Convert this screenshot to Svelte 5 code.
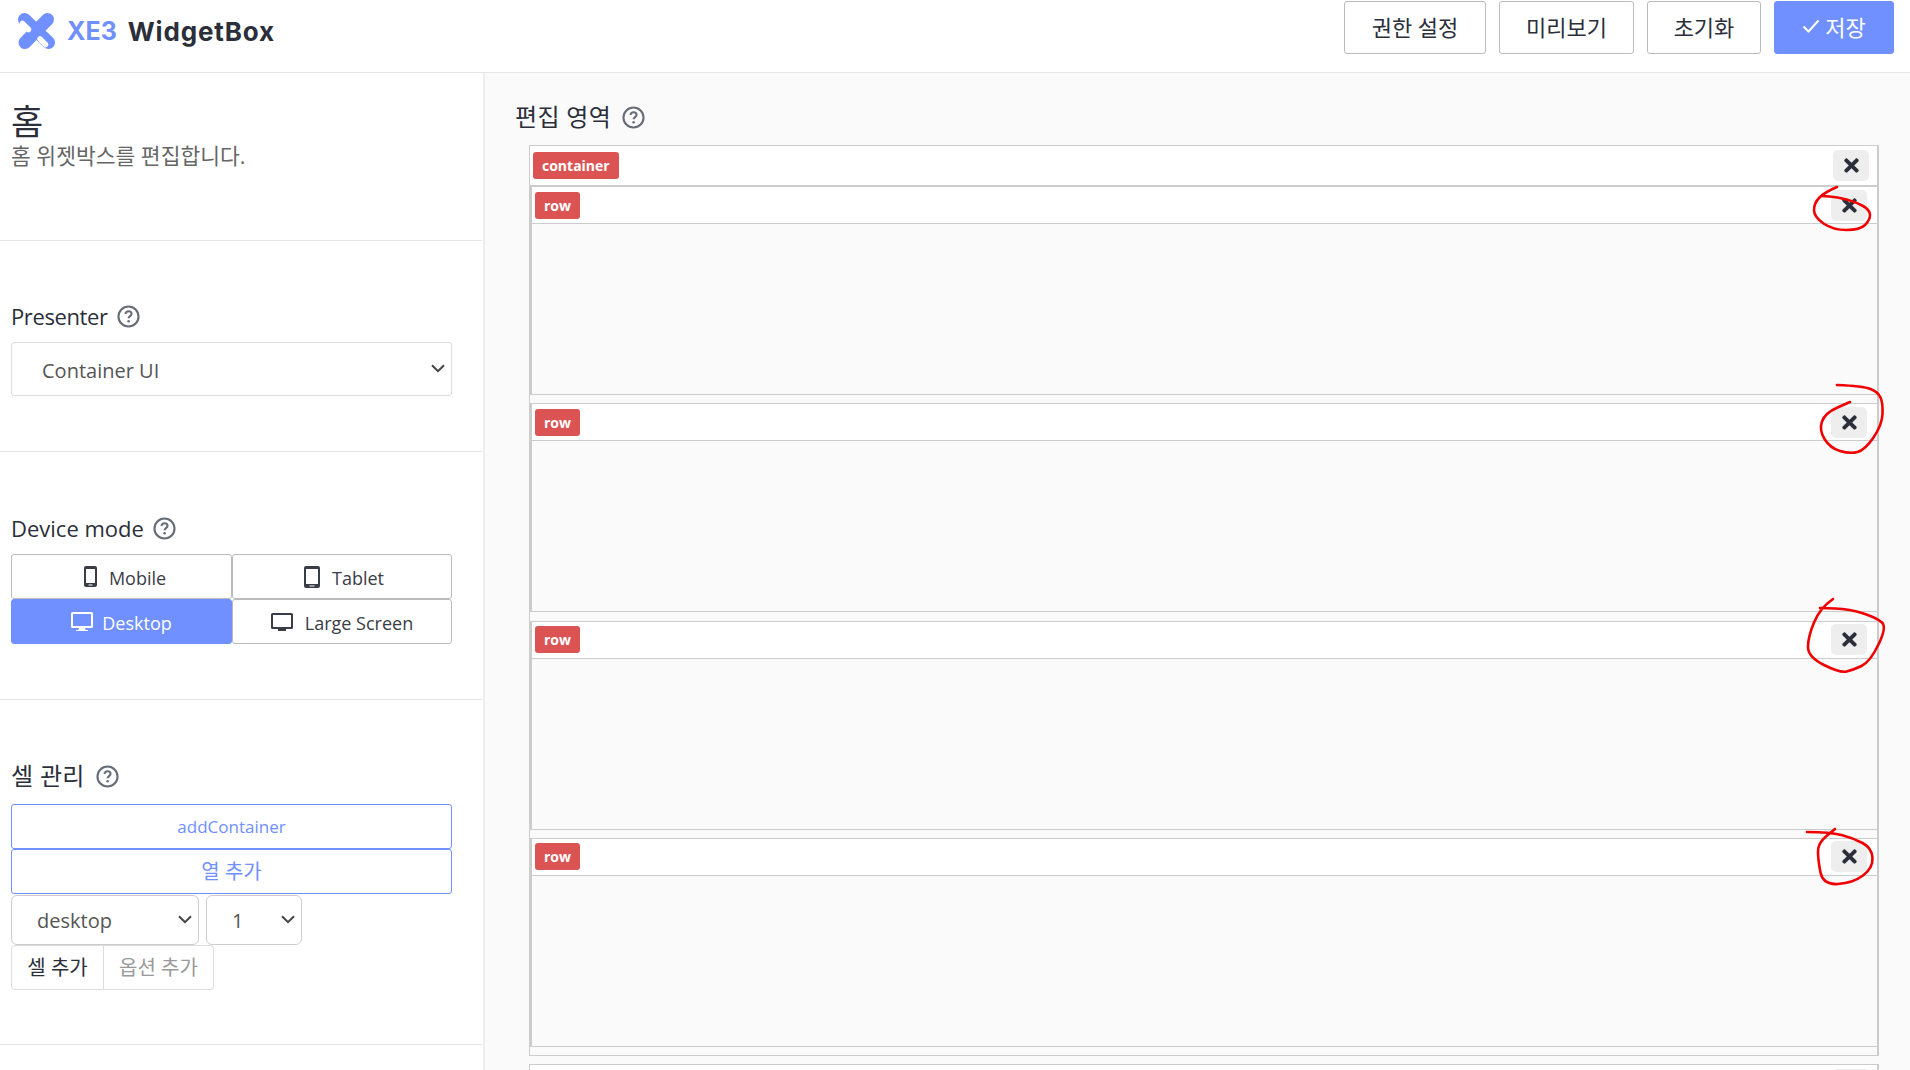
<script>
	const rows = [1, 2, 3, 4];

	// hand drawn red marks over the delete buttons
	const marks = [
		[[1837, 187], [1825, 192], [1814, 203], [1814, 217], [1833, 230], [1860, 230], [1870, 220], [1870, 210], [1856, 202], [1837, 197], [1822, 196]],
		[[1837, 385], [1863, 386], [1878, 392], [1883, 403], [1882, 425], [1865, 450], [1850, 454], [1830, 448], [1819, 430], [1825, 413], [1850, 402]],
		[[1833, 599], [1820, 608], [1808, 637], [1808, 657], [1840, 673], [1853, 670], [1870, 662], [1887, 627], [1877, 618], [1850, 609], [1820, 608]],
		[[1807, 832], [1830, 832], [1853, 838], [1872, 848], [1873, 868], [1853, 883], [1823, 885], [1818, 860], [1818, 843], [1835, 829]]
	];

	function smooth(points) {
		let d = `M${points[0][0]} ${points[0][1]}`;
		for (let i = 1; i < points.length - 1; i++) {
			const mx = (points[i][0] + points[i + 1][0]) / 2;
			const my = (points[i][1] + points[i + 1][1]) / 2;
			d += ` Q${points[i][0]} ${points[i][1]} ${mx} ${my}`;
		}
		const last = points[points.length - 1];
		return d + ` L${last[0]} ${last[1]}`;
	}

	const timesPath =
		'M242.72 256l100.07-100.07c12.28-12.28 12.28-32.19 0-44.48l-22.24-22.24c-12.28-12.28-32.19-12.28-44.48 0L176 189.28 75.93 89.21c-12.28-12.28-32.19-12.28-44.48 0L9.21 111.45c-12.28 12.28-12.28 32.19 0 44.48L109.28 256 9.21 356.07c-12.28 12.28-12.28 32.19 0 44.48l22.24 22.24c12.28 12.28 32.2 12.28 44.48 0L176 322.72l100.07 100.07c12.28 12.28 32.2 12.28 44.48 0l22.24-22.24c12.28-12.28 12.28-32.19 0-44.48L242.72 256z';
</script>

{#snippet help()}
	<svg class="help" viewBox="0 0 22 22" width="23" height="23">
		<circle cx="11" cy="11" r="9.6" fill="none" stroke="#666c78" stroke-width="2" />
		<path d="M8.2 8.6c0-1.6 1.2-2.600 2.900-2.600s2.800 1 2.800 2.400c0 2.200-2.800 2.200-2.800 4.200" fill="none" stroke="#666c78" stroke-width="2" />
		<circle cx="11.1" cy="15.600" r="1.200" fill="#666c78" />
	</svg>
{/snippet}

{#snippet times()}
	<svg viewBox="0 0 352 512" width="15" height="21"><path d={timesPath} fill="#2b2f3a" /></svg>
{/snippet}

{#snippet chevron()}
	<svg class="chev" viewBox="0 0 14 9" width="14" height="9"><path d="M1 1.200l6 6 6-6" fill="none" stroke="#444" stroke-width="2" /></svg>
{/snippet}

<div class="page">
	<header class="topbar">
		<div class="logo">
			<svg viewBox="0 0 39 38" width="39" height="38">
				<line x1="30.500" y1="7.500" x2="8" y2="30.500" stroke="#7090ff" stroke-width="13" stroke-linecap="round" />
				<line x1="7.500" y1="7.500" x2="31.500" y2="30.500" stroke="#7090ff" stroke-width="13" stroke-linecap="round" />
				<line x1="5.500" y1="11.500" x2="11.500" y2="17.500" stroke="#fff" stroke-width="5.500" stroke-linecap="round" />
				<line x1="23" y1="27" x2="28.500" y2="32.500" stroke="#fff" stroke-width="5.500" stroke-linecap="round" />
			</svg>
			<span class="xe">XE3</span>
			<span class="wb">WidgetBox</span>
		</div>
		<div class="actions">
			<button class="btn w-auth">권한 설정</button>
			<button class="btn w-prev">미리보기</button>
			<button class="btn w-reset">초기화</button>
			<button class="btn save">
				<svg viewBox="0 0 18 14" width="18" height="14"><path d="M1.500 7.500l5 5 10-11" fill="none" stroke="#fff" stroke-width="2" /></svg>
				저장
			</button>
		</div>
	</header>

	<div class="body">
		<aside class="side">
			<section class="sec sec-title">
				<h1>홈</h1>
				<p>홈 위젯박스를 편집합니다.</p>
			</section>

			<section class="sec sec-presenter">
				<div class="label tight">Presenter {@render help()}</div>
				<div class="select full">
					<select><option>Container UI</option></select>
					{@render chevron()}
				</div>
			</section>

			<section class="sec sec-device">
				<div class="label">Device mode {@render help()}</div>
				<div class="devices">
					<button class="dev mobile">
						<svg viewBox="0 0 13 21" width="13" height="21"><path fill-rule="evenodd" d="M2 0h9a2 2 0 0 1 2 2v17a2 2 0 0 1-2 2H2a2 2 0 0 1-2-2V2a2 2 0 0 1 2-2zm0 3v14h9V3zm2.500 15.500v1h4v-1z" fill="#3a3d46" /></svg>
						<span>Mobile</span>
					</button>
					<button class="dev tablet">
						<svg viewBox="0 0 16 22" width="16" height="22"><path fill-rule="evenodd" d="M2 0h12a2 2 0 0 1 2 2v18a2 2 0 0 1-2 2H2a2 2 0 0 1-2-2V2a2 2 0 0 1 2-2zm0 3v15h12V3zm3.500 16.500v1h5v-1z" fill="#3a3d46" /></svg>
						<span>Tablet</span>
					</button>
					<button class="dev on">
						<svg viewBox="0 0 22 19" width="22" height="19"><path fill-rule="evenodd" d="M1.500 0h19A1.500 1.500 0 0 1 22 1.500v13a1.500 1.500 0 0 1-1.500 1.500H14l.6 2H17v1H5v-1h2.400l.6-2H1.500A1.500 1.500 0 0 1 0 14.500v-13A1.500 1.500 0 0 1 1.500 0zM2 2v12h18V2z" fill="#fff" /></svg>
						<span>Desktop</span>
					</button>
					<button class="dev">
						<svg viewBox="0 0 22 18" width="22" height="18"><path fill-rule="evenodd" d="M1.500 0h19A1.500 1.500 0 0 1 22 1.500v13a1.500 1.500 0 0 1-1.500 1.500H15v2H7v-2H1.500A1.500 1.500 0 0 1 0 14.500v-13A1.500 1.500 0 0 1 1.500 0zM2 2v12h18V2z" fill="#3a3d46" /></svg>
						<span>Large Screen</span>
					</button>
				</div>
			</section>

			<section class="sec sec-cell">
				<div class="label ko">셀 관리 {@render help()}</div>
				<button class="outline">addContainer</button>
				<button class="outline ko-btn">열 추가</button>
				<div class="pickers">
					<div class="select mode">
						<select><option>desktop</option></select>
						{@render chevron()}
					</div>
					<div class="select count">
						<select><option>1</option></select>
						{@render chevron()}
					</div>
				</div>
				<div class="group">
					<button class="g1">셀 추가</button>
					<button class="g2">옵션 추가</button>
				</div>
			</section>
		</aside>

		<main class="editor">
			<div class="label ko">편집 영역 {@render help()}</div>
			<div class="box">
				<div class="box-head">
					<span class="tag">container</span>
					<button class="del">{@render times()}</button>
				</div>
				<div class="rows">
					{#each rows as r (r)}
						<div class="row">
							<div class="row-head">
								<span class="tag">row</span>
								<button class="del">{@render times()}</button>
							</div>
							<div class="row-body"></div>
						</div>
					{/each}
				</div>
			</div>
			<div class="box next">
				<div class="box-head">
					<button class="del">{@render times()}</button>
				</div>
			</div>
		</main>
	</div>

	<svg class="marks" viewBox="0 0 1910 1070" width="1910" height="1070">
		{#each marks as m}
			<path d={smooth(m)} fill="none" stroke="#f00000" stroke-width="2.600" stroke-linecap="round" stroke-linejoin="round" />
		{/each}
	</svg>
</div>

<style>
	:global(body) {
		margin: 0;
		background: #fff;
	}

	.page {
		position: relative;
		width: 1910px;
		height: 1070px;
		overflow: hidden;
		font-family: 'Open Sans', 'Noto Sans CJK KR', sans-serif;
		color: #2b2f3a;
	}

	button {
		font-family: inherit;
		cursor: pointer;
	}

	/* === TOP BAR === */
	.topbar {
		height: 72px;
		box-sizing: content-box;
		border-bottom: 1px solid #e6e6e6;
		display: flex;
		align-items: flex-start;
		justify-content: space-between;
		padding: 0 16px 0 17px;
	}

	.logo {
		display: flex;
		align-items: center;
		height: 64px;
		margin-top: -1px;
	}

	.xe,
	.wb {
		font-family: Inter, sans-serif;
		font-weight: 700;
		font-size: 25px;
	}

	.xe {
		color: #7090ff;
		margin-left: 11px;
		margin-right: 11px;
	}

	.wb {
		font-size: 26px;
		letter-spacing: 0.85px;
		color: #2b2f3a;
	}

	.actions {
		display: flex;
		gap: 13px;
		padding-top: 1px;
	}

	.btn {
		height: 53px;
		background: #fff;
		border: 1px solid #bbb;
		border-radius: 3px;
		font-size: 22px;
		color: #2b2f3a;
		padding: 0 0 4px;
	}

	.w-auth { width: 142px; }
	.w-prev { width: 135px; }
	.w-reset { width: 114px; }

	.save {
		width: 120px;
		background: #7090ff;
		border-color: #7090ff;
		color: #fff;
		display: flex;
		align-items: center;
		justify-content: center;
		gap: 5px;
	}

	/* === LAYOUT === */
	.body {
		display: flex;
		height: 997px;
	}

	.side {
		width: 482px;
		flex: none;
		border-right: 2px solid #eee;
		padding-right: 1px;
		box-sizing: content-box;
	}

	.sec {
		border-bottom: 1px solid #e6e6e6;
		padding: 0 0 0 11px;
		box-sizing: border-box;
	}

	.sec-title { height: 168px; padding-top: 29px; }
	.sec-presenter { height: 211px; padding-top: 60px; }
	.sec-device { height: 248px; padding-top: 61px; }
	.sec-cell { height: 345px; padding-top: 61px; }

	h1 {
		margin: 0;
		font-size: 35px;
		line-height: 40px;
		font-weight: 400;
	}

	.sec-title p {
		margin: 0;
		font-size: 21.500px;
		line-height: 27px;
		color: #666;
	}

	.label {
		display: flex;
		align-items: center;
		gap: 9px;
		font-size: 22px;
		line-height: 30px;
		margin-bottom: 11px;
	}

	.label.tight {
		letter-spacing: -0.4px;
	}

	.label.ko {
		font-size: 24px;
		letter-spacing: 0.3px;
		gap: 11px;
		margin-bottom: 13px;
	}

	/* === SELECTS === */
	.select {
		position: relative;
		box-sizing: border-box;
	}

	.select select {
		appearance: none;
		width: 100%;
		height: 100%;
		background: #fff;
		font-family: inherit;
		font-size: 20px;
		color: #555;
		border: 1px solid #ccc;
		border-radius: 6px;
		box-sizing: border-box;
		padding: 0 0 0 25px;
	}

	.chev {
		position: absolute;
		right: 7px;
		top: 50%;
		margin-top: -5px;
		pointer-events: none;
	}

	.full {
		width: 441px;
		height: 54px;
	}

	.full select {
		border-color: #ddd;
		border-radius: 3px;
		padding: 2px 0 0 30px;
	}

	/* === DEVICE MODE === */
	.devices {
		width: 441px;
		display: grid;
		grid-template-columns: 221px 220px;
		grid-auto-rows: 45px;
		margin-top: 1px;
	}

	.dev {
		background: #fff;
		border: 1px solid #bbb;
		font-size: 18px;
		color: #3a3d46;
		display: flex;
		align-items: center;
		justify-content: center;
		gap: 12px;
		padding: 0;
		border-radius: 3px;
	}

	.dev span {
		padding-top: 2px;
	}

	.dev.mobile {
		padding-left: 7px;
	}

	.dev.tablet {
		padding-left: 4px;
	}

	.dev.on {
		background: #7090ff;
		border-color: #7090ff;
		color: #fff;
		gap: 9px;
	}

	/* === CELL MANAGEMENT === */
	.outline {
		display: block;
		width: 441px;
		height: 45px;
		background: #fff;
		border: 1px solid #7090ff;
		border-radius: 3px;
		color: #7090ff;
		font-size: 17px;
		padding: 0;
	}

	.ko-btn {
		font-size: 20px;
		padding-bottom: 2px;
	}

	.pickers {
		display: flex;
		gap: 7px;
		margin-top: 1px;
	}

	.mode {
		width: 188px;
		height: 50px;
	}

	.count {
		width: 96px;
		height: 50px;
	}

	.group {
		display: flex;
	}

	.group button {
		height: 45px;
		background: #fff;
		font-size: 20px;
		padding: 0 0 2px;
		border: 1px solid #ddd;
	}

	.g1 {
		width: 93px;
		color: #2b2f3a;
		border-radius: 4px 0 0 4px;
	}

	.g2 {
		width: 110px;
		color: #999;
		border-left: 0 !important;
		border-radius: 0 4px 4px 0;
	}

	/* === EDIT AREA === */
	.editor {
		flex: 1;
		background: #fafafa;
		padding: 29px 0 0 30px;
		min-width: 0;
	}

	.editor .label {
		margin: 0 0 13px;
	}

	.box {
		width: 1350px;
		margin-left: 14px;
		box-sizing: border-box;
		border: 1px solid #ccc;
		border-right-width: 2px;
		padding-bottom: 8px;
	}

	.box.next {
		margin-top: 8px;
	}

	.box-head {
		height: 39px;
		background: #fff;
		display: flex;
		align-items: center;
		justify-content: space-between;
		padding: 0 8px 0 3px;
		border-bottom: 1px solid #ccc;
		box-sizing: content-box;
	}

	.box.next .box-head {
		justify-content: flex-end;
	}

	.rows {
		display: flex;
		flex-direction: column;
		gap: 8.330px;
	}

	.row {
		height: 209px;
		border-left: 2px solid #ccc;
		border-bottom: 1px solid #ccc;
		box-sizing: border-box;
		display: flex;
		flex-direction: column;
	}

	.row-head {
		height: 38px;
		flex: none;
		background: #fff;
		display: flex;
		align-items: center;
		justify-content: space-between;
		padding: 0 10px 0 3px;
		border-top: 1px solid #ccc;
		border-bottom: 1px solid #ccc;
		box-sizing: border-box;
	}

	.tag {
		background: #db5353;
		color: #fff;
		font-size: 14px;
		font-weight: 700;
		line-height: 27px;
		padding: 0 9px;
		border-radius: 3px;
	}

	.del {
		width: 36px;
		height: 31px;
		background: #eee;
		border: 0;
		border-radius: 5px;
		padding: 0;
		display: flex;
		align-items: center;
		justify-content: center;
	}

	/* === RED PEN MARKS === */
	.marks {
		position: absolute;
		left: 0;
		top: 0;
		pointer-events: none;
	}
</style>
